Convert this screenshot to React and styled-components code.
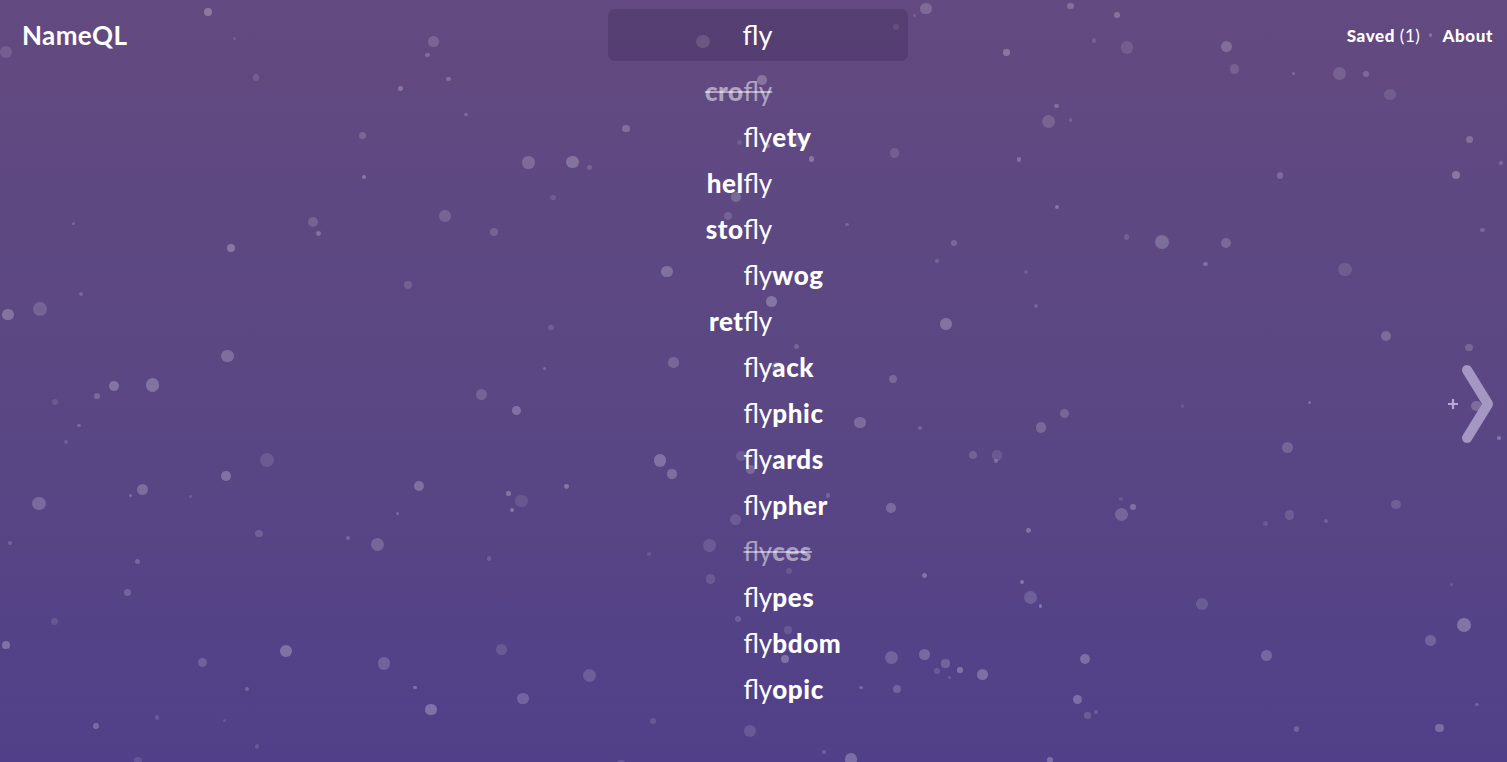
import React from "react";
import styled, { createGlobalStyle } from "styled-components";

const GlobalStyle = createGlobalStyle`
    html, body {
        margin: 0;
        padding: 0;
    }
    body {
        font-family: "Lato", "Open Sans", sans-serif;
        color: #fff;
    }
`;

const Page = styled.div`
    position: relative;
    min-height: 100vh;
    overflow: hidden;
    background: linear-gradient(180deg, #634a80 0%, #5a4783 50%, #514089 100%);
`;

const Dots = styled.div`
    position: absolute;
    inset: 0;
    pointer-events: none;
`;

const Dot = styled.span`
    position: absolute;
    border-radius: 50%;
    background: #fff;
`;

const Header = styled.header`
    position: relative;
    display: grid;
    grid-template-columns: 1fr 300px 1fr;
    align-items: center;
    padding: 9px 14px 0 22px;
    height: 52px;
`;

const Logo = styled.div`
    font-size: 26px;
    font-weight: 700;
    letter-spacing: 0.4px;
`;

const Search = styled.div`
    height: 52px;
    border-radius: 7px;
    background: rgba(60, 40, 80, 0.32);
    display: flex;
    align-items: center;
    justify-content: center;
    font-size: 27px;
    padding-bottom: 2px;
    box-sizing: border-box;
`;

const Nav = styled.nav`
    display: flex;
    justify-content: flex-end;
    gap: 22px;
    font-size: 17px;
    font-weight: 900;
    letter-spacing: 0.6px;
`;

const Count = styled.span`
    font-weight: 400;
`;

const List = styled.div`
    position: relative;
    margin-top: 7px;
    padding-right: 20px;
`;

const Row = styled.div`
    display: grid;
    grid-template-columns: 1fr 1fr;
    height: 46px;
    line-height: 46px;
    font-size: 26px;
    color: ${(p) => (p.$taken ? "rgba(255,255,255,0.5)" : "#fff")};
    text-decoration: ${(p) => (p.$taken ? "line-through" : "none")};
    text-decoration-thickness: 2px;
`;

const Prefix = styled.span`
    text-align: right;
    font-weight: 900;
    letter-spacing: 0.5px;
`;

const Rest = styled.span`
    text-align: left;
`;

const Bold = styled.b`
    font-weight: 900;
    letter-spacing: 0.6px;
`;

const Next = styled.div`
    position: absolute;
    right: 12px;
    top: 362px;
    display: flex;
    align-items: center;
`;

const rows = [
    { pre: "cro", taken: true },
    { suf: "ety" },
    { pre: "hel" },
    { pre: "sto" },
    { suf: "wog" },
    { pre: "ret" },
    { suf: "ack" },
    { suf: "phic" },
    { suf: "ards" },
    { suf: "pher" },
    { suf: "ces", taken: true },
    { suf: "pes" },
    { suf: "bdom" },
    { suf: "opic" },
];

function rng(seed) {
    let a = seed;
    return () => {
        a |= 0;
        a = (a + 0x6d2b79f5) | 0;
        let t = Math.imul(a ^ (a >>> 15), 1 | a);
        t = (t + Math.imul(t ^ (t >>> 7), 61 | t)) ^ t;
        return ((t ^ (t >>> 14)) >>> 0) / 4294967296;
    };
}

const rand = rng(42);
const dots = Array.from({ length: 190 }, () => {
    const r = rand();
    const size = r < 0.45 ? 3 + rand() * 3 : 6 + rand() * 8;
    return {
        x: rand() * 1507,
        y: rand() * 762,
        size,
        op: 0.1 + rand() * 0.17,
    };
});

export default function App() {
    return (
        <Page>
            <GlobalStyle />
            <Dots>
                {dots.map((d, i) => (
                    <Dot
                        key={i}
                        style={{ left: d.x, top: d.y, width: d.size, height: d.size, opacity: d.op }}
                    />
                ))}
            </Dots>
            <Header>
                <Logo>NameQL</Logo>
                <Search>fly</Search>
                <Nav>
                    <span>Saved <Count>(1)</Count></span>
                    <span>About</span>
                </Nav>
            </Header>
            <List>
                {rows.map((r, i) => (
                    <Row key={i} $taken={r.taken}>
                        <Prefix>{r.pre}</Prefix>
                        <Rest>
                            fly{r.suf && <Bold>{r.suf}</Bold>}
                        </Rest>
                    </Row>
                ))}
            </List>
            <Next>
                <svg width="12" height="14" viewBox="0 0 12 14">
                    <path d="M6 2v10M1 7h10" stroke="#b6abcf" strokeWidth="2.2" />
                </svg>
                <svg width="36" height="84" viewBox="0 0 36 84">
                    <polyline
                        points="8,8 29,42 8,76"
                        fill="none"
                        stroke="#a497c2"
                        strokeWidth="10"
                        strokeLinecap="round"
                        strokeLinejoin="round"
                    />
                </svg>
            </Next>
        </Page>
    );
}
